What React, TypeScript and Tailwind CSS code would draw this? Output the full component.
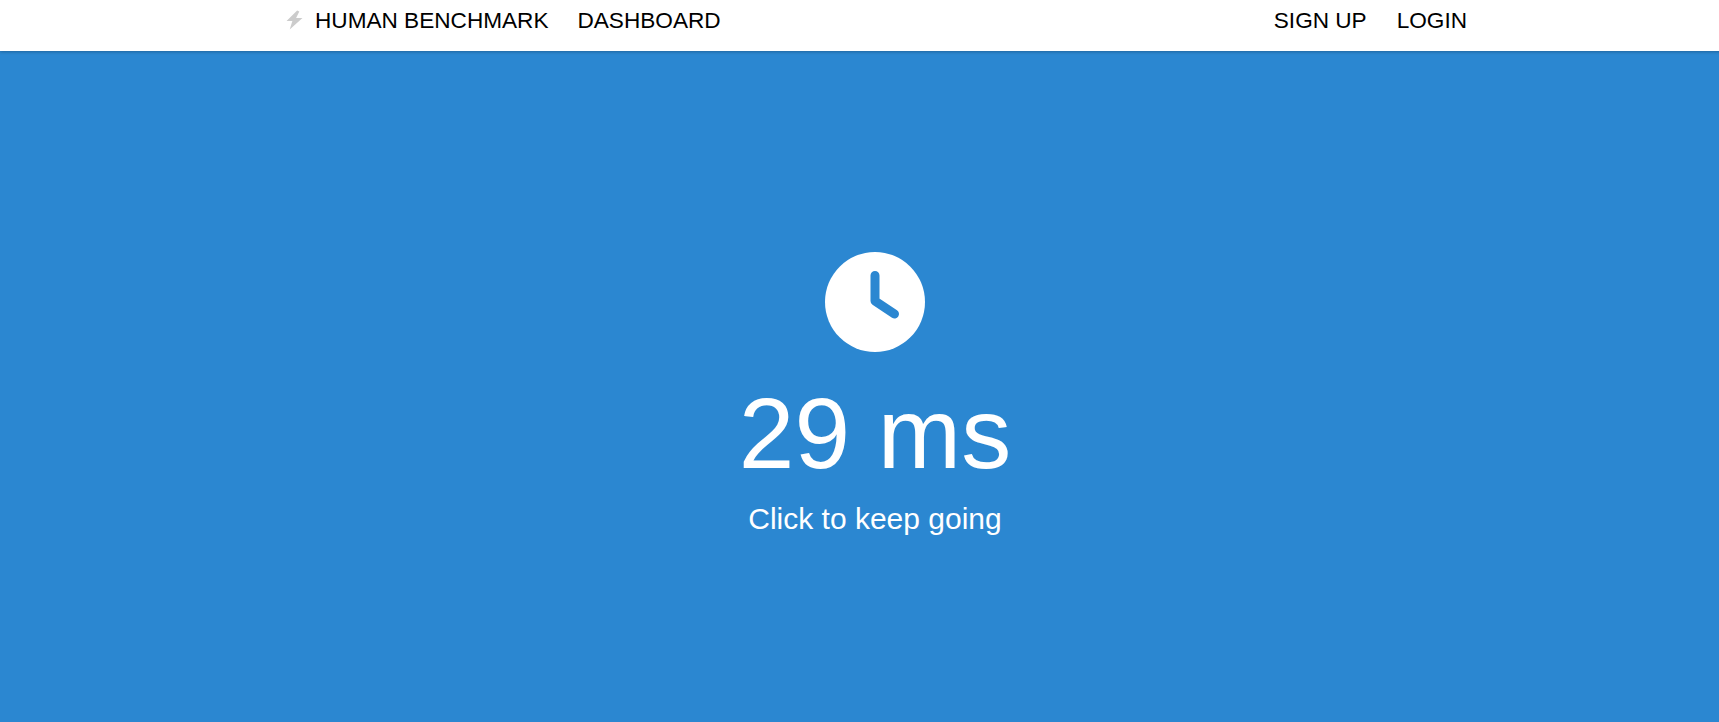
import React from 'react';

const font = { fontFamily: '"Liberation Sans", Arial, sans-serif' };

function BoltIcon() {
  return (
    <svg width="17" height="20" viewBox="0 0 16 18" className="mr-[12px] shrink-0">
      <path d="M10.5 0 L0.5 10 H6 L3.5 18 L15.5 7 H9.5 L12.5 1 Z" fill="#cccccc" />
    </svg>
  );
}

function ClockIcon() {
  return (
    <svg width="100" height="100" viewBox="0 0 100 100" className="block">
      <circle cx="50" cy="50" r="50" fill="#ffffff" />
      <path d="M50 23.5 V49 L69.5 62" fill="none" stroke="#2b87d1" strokeWidth="9" strokeLinecap="round" strokeLinejoin="round" />
    </svg>
  );
}

export default function App() {
  return (
    <div className="h-[722px] overflow-hidden">
      {/* page runs wider than the window, so everything sits a bit right of centre */}
      <div className="flex h-[722px] w-[1750px] flex-col bg-[#2b87d1]" style={font}>
        {/* Top nav */}
        <nav className="relative z-10 h-[51px] bg-white shadow-[0_1px_3px_rgba(0,0,0,0.25)]">
          <div className="ml-[286px] flex h-[41px] w-[1181px] items-center justify-between text-[22.6px] text-black">
            <div className="flex items-center">
              <BoltIcon />
              <span>HUMAN BENCHMARK</span>
              <span className="ml-[29px]">DASHBOARD</span>
            </div>
            <div className="flex items-center gap-[30px]">
              <span>SIGN UP</span>
              <span>LOGIN</span>
            </div>
          </div>
        </nav>

        {/* Result panel */}
        <main className="flex flex-1 flex-col items-center pt-[201px] text-white">
          <ClockIcon />
          <h1 className="mt-[21px] text-[100px] leading-[120px] font-normal">29 ms</h1>
          <p className="mt-[6px] text-[30px] leading-[40px]">Click to keep going</p>
        </main>
      </div>
    </div>
  );
}
